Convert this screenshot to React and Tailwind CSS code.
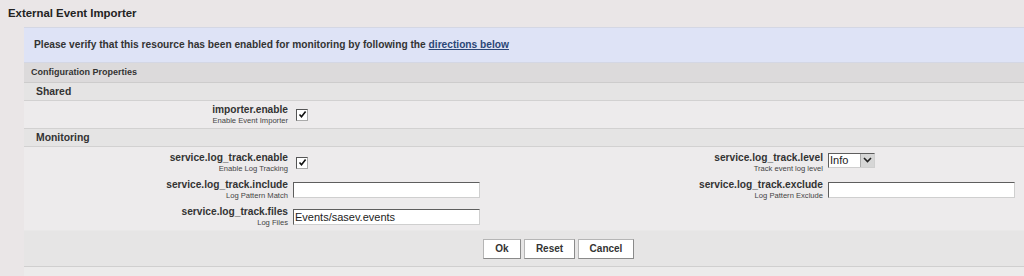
import React from "react";

function Check() {
  return (
    <span className="inline-flex w-[12px] h-[12px] items-center justify-center bg-white border border-t-[#555] border-l-[#555] border-b-[#aaa] border-r-[#aaa]">
      <svg width="9" height="9" viewBox="0 0 9 9">
        <path d="M1.5 4.5 L3.5 6.8 L7.6 1.6" fill="none" stroke="#111" strokeWidth="1.6" />
      </svg>
    </span>
  );
}

function TextInput({ value = "", w = "w-[187px]" }) {
  return (
    <div className={`${w} h-[16px] bg-white border border-t-[#5e5e5e] border-l-[#5e5e5e] border-b-[#cfcfcf] border-r-[#cfcfcf] text-[11px] leading-[14px] pl-[1px] text-[#222] overflow-hidden`}>
      {value}
    </div>
  );
}

function Label({ name, desc }) {
  return (
    <div className="flex flex-col items-end pr-[2px] text-right">
      <div className="text-[10.2px] leading-[11px] font-bold text-[#333]">{name}</div>
      <div className="text-[7.6px] leading-[11px] text-[#444]">{desc}</div>
    </div>
  );
}

function Select() {
  return (
    <div className="w-[47px] h-[15px] bg-white border border-t-[#5e5e5e] border-l-[#5e5e5e] border-b-[#cfcfcf] border-r-[#cfcfcf] flex">
      <div className="flex-1 text-[11px] leading-[13px] pl-[1px] text-[#222]">Info</div>
      <div className="w-[14px] h-[13px] bg-[#d6d6d6] border-l border-[#aaa] flex items-center justify-center">
        <svg width="9" height="6" viewBox="0 0 9 6">
          <path d="M1 1 L4.5 4.6 L8 1" fill="none" stroke="#222" strokeWidth="1.6" />
        </svg>
      </div>
    </div>
  );
}

function Btn({ children, w }) {
  return (
    <div className={`${w} h-[20px] bg-white border border-t-[#b5b5b5] border-l-[#b5b5b5] border-b-[#8a8a8a] border-r-[#8a8a8a] flex items-center justify-center text-[10px] font-bold text-[#333]`}>
      {children}
    </div>
  );
}

export default function App() {
  return (
    <div className="w-[1024px] h-[276px] overflow-hidden bg-[#eae6e7] font-['Liberation_Sans',Arial,sans-serif]">
      <div className="h-[27px] pl-[8px] flex items-center text-[11.4px] font-bold text-[#222]">
        External Event Importer
      </div>
      <div className="ml-[24px]">
        <div className="h-[36px] bg-[#dee3f6] border-t border-b border-[#d4d7e4] flex items-center pl-[10px] text-[10.2px] font-bold text-[#333]">
          <span>
            Please verify that this resource has been enabled for monitoring by following the{" "}
            <a className="underline text-[#2b4777]">directions below</a>
          </span>
        </div>
        <div className="h-[20px] bg-[#dcdadb] border-b border-[#cdcccc] flex items-center pl-[7px] text-[9px] font-bold text-[#333]">
          Configuration Properties
        </div>
        <div className="h-[18px] bg-[#e5e4e4] border-b border-[#d2d1d1] flex items-center pl-[12px] text-[10.4px] font-bold text-[#333]">
          Shared
        </div>
        <div className="h-[27px] bg-[#edebec] grid grid-cols-[266px_236px_300px_198px] items-center">
          <div className="pt-[1px]">
            <Label name="importer.enable" desc="Enable Event Importer" />
          </div>
          <div className="pl-[6px] flex items-center">
            <Check />
          </div>
        </div>
        <div className="h-[19px] bg-[#e5e4e4] border-t border-b border-[#d2d1d1] flex items-center pl-[12px] text-[10.4px] font-bold text-[#333]">
          Monitoring
        </div>
        <div className="bg-[#edebec] pt-[2px] flex flex-col">
          <div className="h-[27px] grid grid-cols-[266px_236px_300px_198px] items-center">
            <Label name="service.log_track.enable" desc="Enable Log Tracking" />
            <div className="pl-[6px] flex items-center">
              <Check />
            </div>
            <div className="pr-[1px]">
              <Label name="service.log_track.level" desc="Track event log level" />
            </div>
            <div className="pl-[2px] mb-[5px]">
              <Select />
            </div>
          </div>
          <div className="h-[27px] grid grid-cols-[266px_236px_300px_198px] items-center">
            <Label name="service.log_track.include" desc="Log Pattern Match" />
            <div className="pl-[3px]">
              <TextInput />
            </div>
            <div className="pr-[1px]">
              <Label name="service.log_track.exclude" desc="Log Pattern Exclude" />
            </div>
            <div className="pl-[2px]">
              <TextInput w="w-[187px]" />
            </div>
          </div>
          <div className="h-[27px] grid grid-cols-[266px_236px_300px_198px] items-center">
            <Label name="service.log_track.files" desc="Log Files" />
            <div className="pl-[3px]">
              <TextInput value="Events/sasev.events" />
            </div>
          </div>
        </div>
        <div className="h-[37px] bg-[#e6e5e5] border-t border-b border-t-[#e9e8e8] border-b-[#d0cfcf] flex items-center pl-[459px] gap-[3px]">
          <Btn w="w-[38px]">Ok</Btn>
          <Btn w="w-[51px]">Reset</Btn>
          <Btn w="w-[56px]">Cancel</Btn>
        </div>
        <div className="h-[10px] bg-[#ecebeb]" />
      </div>
    </div>
  );
}
